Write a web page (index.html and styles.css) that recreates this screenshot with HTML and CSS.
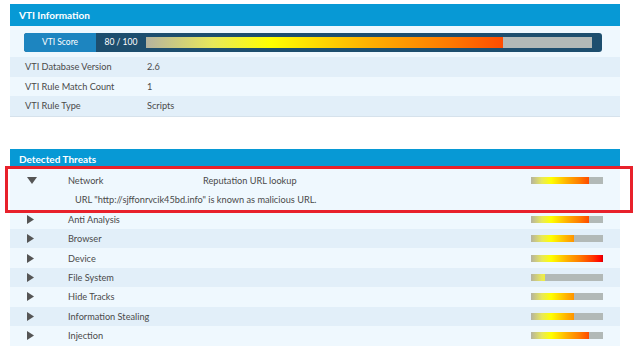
FILE: index.html
```html
<!DOCTYPE html>
<html lang="en">
  <head>
    <meta charset="UTF-8" />
    <meta name="viewport" content="width=device-width, initial-scale=1.0" />
    <title>VTI Report</title>
    <link rel="stylesheet" href="styles.css">
  </head>
  <body>
    <div class="panel">
      <div class="panel-title">VTI Information</div>
      <div class="score-row">
        <div class="score-bar">
          <div class="score-label">VTI Score</div>
          <div class="score-value">80 / 100</div>
          <div class="score-track">
            <div class="rest" style="width: 20%"></div>
          </div>
        </div>
      </div>
      <div class="info-row dark"><span class="info-key">VTI Database Version</span><span>2.6</span></div>
      <div class="info-row"><span class="info-key">VTI Rule Match Count</span><span>1</span></div>
      <div class="info-row dark"><span class="info-key">VTI Rule Type</span><span>Scripts</span></div>
    </div>

    <div class="panel threats">
      <div class="panel-title">Detected Threats</div>

      <div class="expanded">
        <div class="threat open">
          <span class="arrow"><svg width="10" height="7" viewBox="0 0 10 7"><polygon points="0,0 10,0 5,7" /></svg></span>
          <span class="category">Network</span>
          <span class="rule">Reputation URL lookup</span>
          <div class="mini"><div class="rest" style="width: 20%"></div></div>
        </div>
        <div class="detail">URL "http://sjffonrvcik45bd.info" is known as malicious URL.</div>
      </div>

      <div class="threat">
        <span class="arrow"><svg width="7" height="9" viewBox="0 0 7 9"><polygon points="0,0 7,4.5 0,9" /></svg></span>
        <span class="category">Anti Analysis</span>
        <div class="mini"><div class="rest" style="width: 20%"></div></div>
      </div>
      <div class="threat dark">
        <span class="arrow"><svg width="7" height="9" viewBox="0 0 7 9"><polygon points="0,0 7,4.5 0,9" /></svg></span>
        <span class="category">Browser</span>
        <div class="mini"><div class="rest" style="width: 40%"></div></div>
      </div>
      <div class="threat">
        <span class="arrow"><svg width="7" height="9" viewBox="0 0 7 9"><polygon points="0,0 7,4.5 0,9" /></svg></span>
        <span class="category">Device</span>
        <div class="mini"><div class="rest" style="width: 0%"></div></div>
      </div>
      <div class="threat dark">
        <span class="arrow"><svg width="7" height="9" viewBox="0 0 7 9"><polygon points="0,0 7,4.5 0,9" /></svg></span>
        <span class="category">File System</span>
        <div class="mini"><div class="rest" style="width: 80%"></div></div>
      </div>
      <div class="threat">
        <span class="arrow"><svg width="7" height="9" viewBox="0 0 7 9"><polygon points="0,0 7,4.5 0,9" /></svg></span>
        <span class="category">Hide Tracks</span>
        <div class="mini"><div class="rest" style="width: 40%"></div></div>
      </div>
      <div class="threat dark">
        <span class="arrow"><svg width="7" height="9" viewBox="0 0 7 9"><polygon points="0,0 7,4.5 0,9" /></svg></span>
        <span class="category">Information Stealing</span>
        <div class="mini"><div class="rest" style="width: 40%"></div></div>
      </div>
      <div class="threat">
        <span class="arrow"><svg width="7" height="9" viewBox="0 0 7 9"><polygon points="0,0 7,4.5 0,9" /></svg></span>
        <span class="category">Injection</span>
        <div class="mini"><div class="rest" style="width: 20%"></div></div>
      </div>
    </div>
  </body>
</html>
```

FILE: styles.css
```css
body {
  font-family: Lato, "Noto Sans", sans-serif;
  font-size: 9.2px;
  color: #4a4a4a;
  margin: 0;
  padding: 4px 17px 0 10px;
  background-color: #fff;
  overflow: hidden;
}
.panel {
  background-color: #eff8fe;
  border-bottom: 1px solid #d6e2ec;
}
.panel-title {
  height: 22px;
  line-height: 22px;
  padding-left: 9px;
  background-color: #0799d5;
  color: #fff;
  font-size: 10px;
  font-weight: 700;
}
.threats {
  margin-top: 32px;
  border-bottom: none;
}
.threats .panel-title {
  height: 20px;
  line-height: 20px;
}
.score-row {
  padding: 7px 18px 5px 14px;
}
.score-bar {
  display: flex;
  height: 19px;
  background-color: #1d4e6e;
  border-radius: 3px;
  color: #fff;
  font-size: 8.5px;
  line-height: 19px;
}
.score-label {
  width: 72px;
  text-align: center;
  background-color: #1d85c0;
  border-radius: 3px 0 0 3px;
}
.score-value {
  width: 50px;
  text-align: center;
}
.score-track,
.mini {
  position: relative;
  flex: 1;
  background: linear-gradient(to right, #b5b39f 0%, #e8e85a 15%, #ffff00 28%, #ffb000 50%, #ff7a00 68%, #ff3a00 85%, #ff0000 97%, #d40000 100%);
}
.score-track {
  margin: 4px 10px 4px 0;
}
.rest {
  position: absolute;
  top: 0;
  right: 0;
  bottom: 0;
  background-color: #b2b9b7;
}
.info-row {
  display: flex;
  height: 19.5px;
  line-height: 19.5px;
  padding-left: 15px;
}
.info-key {
  width: 122px;
}
.dark {
  background-color: #e2eff9;
}
.expanded {
  outline: 3px solid #e8212b;
  margin: 0 -10px 0 -2px;
  padding: 0 10px 0 2px;
  position: relative;
}
.threat {
  display: flex;
  align-items: center;
  height: 19.45px;
}
.threat.open {
  height: 22px;
  padding-top: 2px;
  box-sizing: border-box;
}
.arrow {
  display: flex;
  fill: #555;
  width: 41px;
  padding-left: 17px;
  flex: none;
}
.category {
  width: 135px;
}
.rule {
  flex: 1;
}
.mini {
  flex: none;
  width: 72px;
  height: 7px;
  margin-left: auto;
  margin-right: 17px;
}
.detail {
  height: 19px;
  line-height: 18px;
  padding-left: 65px;
}
```
